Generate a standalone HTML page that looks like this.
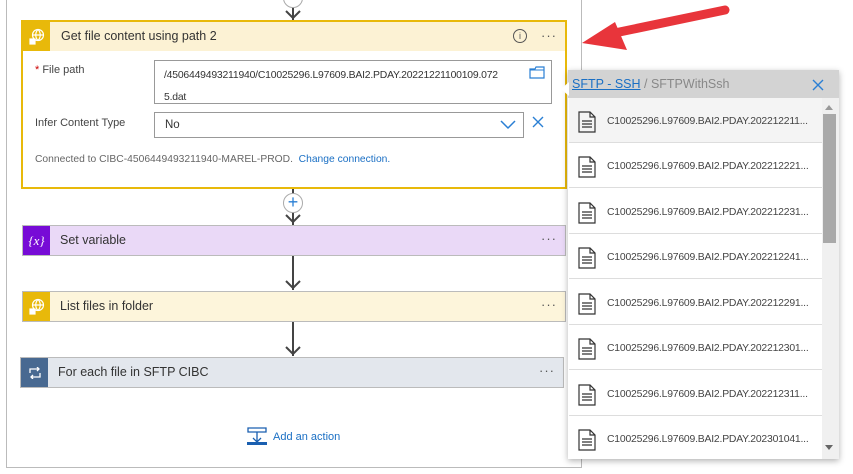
<!DOCTYPE html>
<html><head><meta charset="utf-8"><style>
*{box-sizing:border-box;margin:0;padding:0}
body{width:853px;height:474px;background:#fff;font-family:"Liberation Sans",sans-serif;position:relative;overflow:hidden;color:#333}
.abs{position:absolute}
.outer{left:6px;top:-2px;width:576px;height:470px;border:1px solid #bbb;border-top:none}
.vline{background:#444;width:2px}
.card{position:absolute;border:1px solid #bbb}
.card .ic{position:absolute;left:0;top:0;width:27px;height:100%;display:flex;align-items:center;justify-content:center;color:#fff}
.card .t{position:absolute;left:39px;top:0;line-height:28px;font-size:12.5px;color:#333}
.dots{position:absolute;right:8px;top:0;line-height:26px;font-size:13px;color:#555;letter-spacing:1px}
.row{position:absolute;left:1px;width:253px;height:45px;border-bottom:1px solid #ddd;background:#fff}
.row span{position:absolute;left:38px;top:18px;font-size:10.4px;color:#444;letter-spacing:-0.2px;white-space:nowrap}
.row svg{position:absolute;left:9px;top:13px}
.plus{width:20px;height:20px;border-radius:50%;border:1px solid #aaa;background:#fff;color:#2a7fd4;font-size:18px;line-height:17px;text-align:center}
</style></head><body>
<div class="abs outer"></div>
<div class="abs vline" style="left:292px;top:0;height:20px"></div>
<div class="abs plus" style="left:283px;top:-12px"></div>
<div class="abs vline" style="left:292px;top:188px;height:37px"></div>
<div class="abs plus" style="left:283px;top:193px">+</div>
<svg class="abs" style="left:285px;top:10px" width="16" height="10"><path d="M1 1 L8 8 L15 1" stroke="#444" stroke-width="2" fill="none"/></svg>
<svg class="abs" style="left:285px;top:214px" width="16" height="10"><path d="M1 1 L8 8 L15 1" stroke="#444" stroke-width="2" fill="none"/></svg>
<div class="abs vline" style="left:292px;top:255px;height:35px"></div>
<svg class="abs" style="left:285px;top:280px" width="16" height="10"><path d="M1 1 L8 8 L15 1" stroke="#444" stroke-width="2" fill="none"/></svg>
<div class="abs vline" style="left:292px;top:321px;height:35px"></div>
<svg class="abs" style="left:285px;top:346px" width="16" height="10"><path d="M1 1 L8 8 L15 1" stroke="#444" stroke-width="2" fill="none"/></svg>

<div class="card" style="left:21px;top:20px;width:546px;height:169px;border:2px solid #e8b90a;background:#fff">
 <div style="position:absolute;left:0;top:0;width:100%;height:29px;background:#fcf2d4"></div>
 <div class="ic" style="background:#e8b90a;height:29px"><svg width="18" height="18" viewBox="0 0 18 18" fill="none" stroke="#fff" stroke-width="1.2"><circle cx="10" cy="7" r="5.5"/><path d="M4.5 7h11M10 1.5c-3 3-3 8 0 11M10 1.5c3 3 3 8 0 11"/><rect x="2" y="11" width="5" height="5" fill="#fff"/></svg></div>
 <div class="t" style="left:38px;line-height:29px">Get file content using path 2</div>
 <div class="abs" style="left:490px;top:7px;width:14px;height:14px;border:1px solid #555;border-radius:50%;font-size:9px;text-align:center;line-height:12px;color:#555">i</div>
 <div class="dots" style="line-height:28px">···</div>
 <div class="abs" style="left:12px;top:42px;font-size:11px;color:#444"><span style="color:#c00">*</span> File path</div>
 <div class="abs" style="left:131px;top:38px;width:398px;height:44px;border:1px solid #999;font-size:10.4px;letter-spacing:-0.2px;color:#333;padding:4px 0 0 9px;line-height:22px;white-space:nowrap">/4506449493211940/C10025296.L97609.BAI2.PDAY.20221221100109.072<br>5.dat</div>
 <svg class="abs" style="left:506px;top:44px" width="16" height="13"><path d="M1 3h5l1 -2h8v11H1z" fill="none" stroke="#2a7fd4" stroke-width="1.2"/><path d="M1 4h14" stroke="#2a7fd4"/></svg>
 <div class="abs" style="left:12px;top:95px;font-size:11px;color:#444">Infer Content Type</div>
 <div class="abs" style="left:131px;top:90px;width:370px;height:26px;border:1px solid #999;font-size:11.5px;padding-left:10px;line-height:24px">No</div>
 <svg class="abs" style="left:477px;top:98px" width="16" height="10"><path d="M1 1 L8 8 L15 1" stroke="#2a7fd4" stroke-width="1.5" fill="none"/></svg>
 <svg class="abs" style="left:509px;top:94px" width="12" height="12"><path d="M1 1L11 11M11 1L1 11" stroke="#2a7fd4" stroke-width="1.4"/></svg>
 <div class="abs" style="left:12px;top:132px;font-size:10.3px;color:#666">Connected to CIBC-4506449493211940-MAREL-PROD. &nbsp;<span style="color:#1a6fc4">Change connection.</span></div>
</div>

<div class="card" style="left:22px;top:225px;width:544px;height:31px;background:#ead9f7">
 <div class="ic" style="background:#770bd6;font-family:'Liberation Serif',serif;font-style:italic;font-size:13px">{<i>x</i>}</div>
 <div class="t" style="left:37px">Set variable</div><div class="dots">···</div>
</div>
<div class="card" style="left:22px;top:291px;width:544px;height:31px;background:#fdf5db">
 <div class="ic" style="background:#e8b90a"><svg width="18" height="18" viewBox="0 0 18 18" fill="none" stroke="#fff" stroke-width="1.2"><circle cx="10" cy="7" r="5.5"/><path d="M4.5 7h11M10 1.5c-3 3-3 8 0 11M10 1.5c3 3 3 8 0 11"/><rect x="2" y="11" width="5" height="5" fill="#fff"/></svg></div>
 <div class="t" style="left:37px">List files in folder</div><div class="dots">···</div>
</div>
<div class="card" style="left:20px;top:357px;width:544px;height:31px;background:#e3e7ed">
 <div class="ic" style="background:#486991"><svg width="14" height="12"><path d="M2 6V2h9M12 6v4H3M9 0l2 2-2 2M5 8l-2 2 2 2" stroke="#fff" stroke-width="1.3" fill="none"/></svg></div>
 <div class="t" style="left:37px">For each file in SFTP CIBC</div><div class="dots">···</div>
</div>
<svg class="abs" style="left:247px;top:427px" width="20" height="18"><path d="M1 1h18v4H1zM10 5v10M6 11l4 4 4-4" stroke="#1a5fb0" stroke-width="1.3" fill="none"/><rect x="0" y="15" width="20" height="3" fill="#1a5fb0"/></svg>
<div class="abs" style="left:273px;top:431px;font-size:11px;color:#1a6fc4">Add an action</div>

<div class="abs" style="left:568px;top:70px;width:271px;height:389px;background:#fff;box-shadow:0 2px 6px rgba(0,0,0,.3)">
 <div style="position:absolute;left:0;top:0;width:100%;height:28px;background:#d3d3d3"></div>
 <div class="abs" style="left:4px;top:7px;font-size:12.5px;color:#888"><span style="color:#1a6fc4;text-decoration:underline">SFTP - SSH</span> / SFTPWithSsh</div>
 <svg class="abs" style="left:244px;top:9px" width="12" height="12"><path d="M1 1L11 11M11 1L1 11" stroke="#2a7fd4" stroke-width="1.4"/></svg>
 <div class="abs" style="left:254px;top:28px;width:17px;height:361px;background:#f0f0f0"></div>
 <div class="abs" style="left:255px;top:44px;width:13px;height:129px;background:#a9a9a9"></div>
 <div class="abs" style="left:257px;top:35px;border:4px solid transparent;border-bottom:5px solid #999;border-top:none"></div>
 <div class="abs" style="left:257px;top:375px;border:4px solid transparent;border-top:5px solid #666;border-bottom:none"></div>
</div>
<div class="abs" style="left:561px;top:82px;border:7px solid transparent;border-right:8px solid #fff;border-left:none"></div>
<div class="abs" style="left:568px;top:98px;width:254px;height:361px;overflow:hidden">
 <div class="row" style="top:0;background:#f4f4f4"><svg width="18" height="22"><path d="M1 1h11l5 5v15H1z M12 1v5h5M4 10h10M4 13h10M4 16h10" fill="none" stroke="#333" stroke-width="1.2"/></svg><span>C10025296.L97609.BAI2.PDAY.202212211...</span></div>
 <div class="row" style="top:45px"><svg width="18" height="22"><path d="M1 1h11l5 5v15H1z M12 1v5h5M4 10h10M4 13h10M4 16h10" fill="none" stroke="#333" stroke-width="1.2"/></svg><span>C10025296.L97609.BAI2.PDAY.202212221...</span></div>
 <div class="row" style="top:91px"><svg width="18" height="22"><path d="M1 1h11l5 5v15H1z M12 1v5h5M4 10h10M4 13h10M4 16h10" fill="none" stroke="#333" stroke-width="1.2"/></svg><span>C10025296.L97609.BAI2.PDAY.202212231...</span></div>
 <div class="row" style="top:136px"><svg width="18" height="22"><path d="M1 1h11l5 5v15H1z M12 1v5h5M4 10h10M4 13h10M4 16h10" fill="none" stroke="#333" stroke-width="1.2"/></svg><span>C10025296.L97609.BAI2.PDAY.202212241...</span></div>
 <div class="row" style="top:182px"><svg width="18" height="22"><path d="M1 1h11l5 5v15H1z M12 1v5h5M4 10h10M4 13h10M4 16h10" fill="none" stroke="#333" stroke-width="1.2"/></svg><span>C10025296.L97609.BAI2.PDAY.202212291...</span></div>
 <div class="row" style="top:227px"><svg width="18" height="22"><path d="M1 1h11l5 5v15H1z M12 1v5h5M4 10h10M4 13h10M4 16h10" fill="none" stroke="#333" stroke-width="1.2"/></svg><span>C10025296.L97609.BAI2.PDAY.202212301...</span></div>
 <div class="row" style="top:273px"><svg width="18" height="22"><path d="M1 1h11l5 5v15H1z M12 1v5h5M4 10h10M4 13h10M4 16h10" fill="none" stroke="#333" stroke-width="1.2"/></svg><span>C10025296.L97609.BAI2.PDAY.202212311...</span></div>
 <div class="row" style="top:318px;border:none"><svg width="18" height="22"><path d="M1 1h11l5 5v15H1z M12 1v5h5M4 10h10M4 13h10M4 16h10" fill="none" stroke="#333" stroke-width="1.2"/></svg><span>C10025296.L97609.BAI2.PDAY.202301041...</span></div>
</div>

<svg class="abs" style="left:575px;top:0" width="160" height="60"><path d="M150 10 L30 35" stroke="#e8353b" stroke-width="9" stroke-linecap="round"/><path d="M7 43 L40 22 L52 50 Z" fill="#e8353b"/></svg>
</body></html>
